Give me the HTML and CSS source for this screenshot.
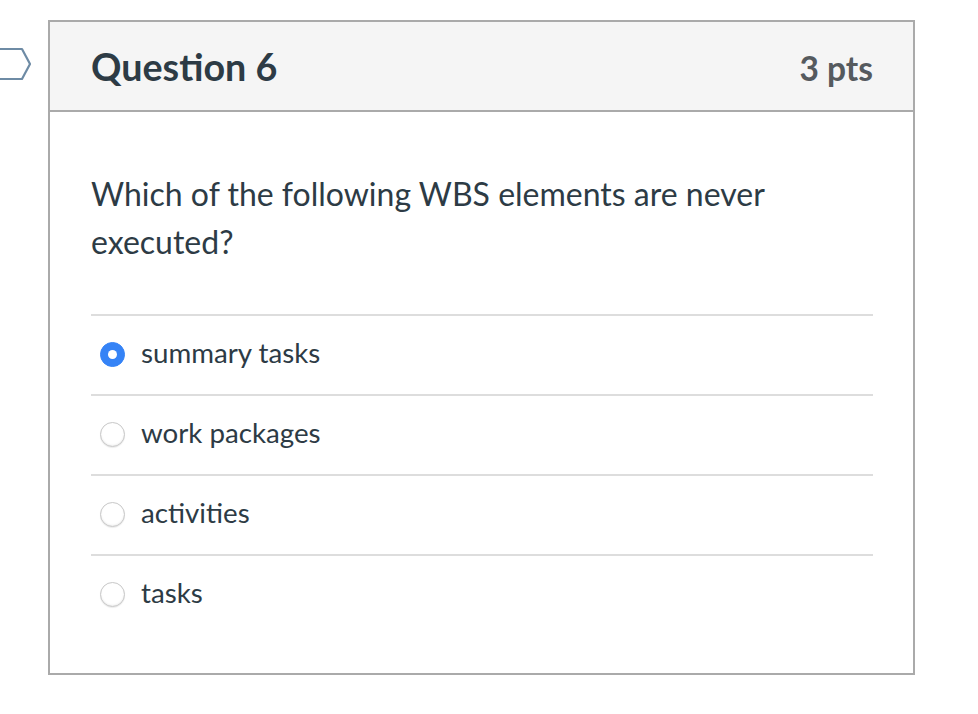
FILE: index.html
```html
<!DOCTYPE html>
<html lang="en">
<head>
<meta charset="utf-8">
<title>Question 6</title>
<link rel="stylesheet" href="styles.css">
</head>
<body>
<div class="page">
  <div class="flag">
    <svg width="34" height="34" viewBox="0 0 34 34" aria-hidden="true">
      <path d="M-4 2 H22 L30 17 L22 32 H-4" fill="none" stroke="#6e8ba5" stroke-width="2.2" stroke-linejoin="round"/>
    </svg>
  </div>
  <div class="question">
    <div class="q-header">
      <h2 class="q-title">Question 6</h2>
      <span class="q-points">3 pts</span>
    </div>
    <div class="q-body">
      <p class="q-text">Which of the following WBS elements are never executed?</p>
      <div class="answers">
        <label class="answer"><span class="radio checked"></span><span class="answer-text">summary tasks</span></label>
        <label class="answer"><span class="radio"></span><span class="answer-text">work packages</span></label>
        <label class="answer"><span class="radio"></span><span class="answer-text">activities</span></label>
        <label class="answer"><span class="radio"></span><span class="answer-text">tasks</span></label>
      </div>
    </div>
  </div>
</div>
</body>
</html>
```

FILE: styles.css
```css
* { box-sizing: border-box; }
html, body { margin: 0; padding: 0; background: #fff; }
body {
  font-family: Lato, "Noto Sans", "Liberation Sans", sans-serif;
  color: #2d3b45;
}
.page {
  display: flex;
  padding-top: 20px;
}
.flag {
  width: 48px;
  flex: 0 0 48px;
  padding-top: 27px;
}
.flag svg { display: block; }
.question {
  width: 867px;
  height: 655px;
  border: 2px solid #aaaaaa;
  display: flex;
  flex-direction: column;
}
.q-header {
  height: 90px;
  background: #f5f5f5;
  border-bottom: 2px solid #aaaaaa;
  display: flex;
  align-items: center;
  justify-content: space-between;
  padding: 0 40px 0 41px;
}
.q-title {
  margin: 0;
  font-size: 37.7px;
  font-weight: 700;
  color: #2d3b45;
}
.q-points {
  font-size: 33.5px;
  font-weight: 700;
  color: #555a5e;
  padding-top: 4px;
}
.q-body {
  padding: 58px 40px 0 41px;
}
.q-text {
  margin: 0 0 48px 0;
  font-size: 32px;
  line-height: 48px;
  width: 720px;
}
.answers {
  display: flex;
  flex-direction: column;
}
.answer {
  display: flex;
  align-items: center;
  gap: 16px;
  height: 80px;
  border-top: 2px solid #dddddd;
  padding-left: 9px;
  padding-bottom: 1px;
  font-size: 27.7px;
}
.answer-text {
  margin-bottom: 5px;
}
.radio {
  width: 25px;
  height: 25px;
  border-radius: 50%;
  background: #fff;
  border: 1px solid #c8c8c8;
  box-shadow: inset 0 -1px 2px rgba(0,0,0,0.08), 0 1px 1px rgba(0,0,0,0.08);
  flex: 0 0 25px;
  position: relative;
}
.radio.checked {
  background: #3583f6;
  border-color: #3583f6;
  box-shadow: none;
}
.radio.checked::after {
  content: "";
  position: absolute;
  left: 50%;
  top: 50%;
  width: 9px;
  height: 9px;
  margin: -4.5px 0 0 -4.5px;
  border-radius: 50%;
  background: #fff;
}
```
